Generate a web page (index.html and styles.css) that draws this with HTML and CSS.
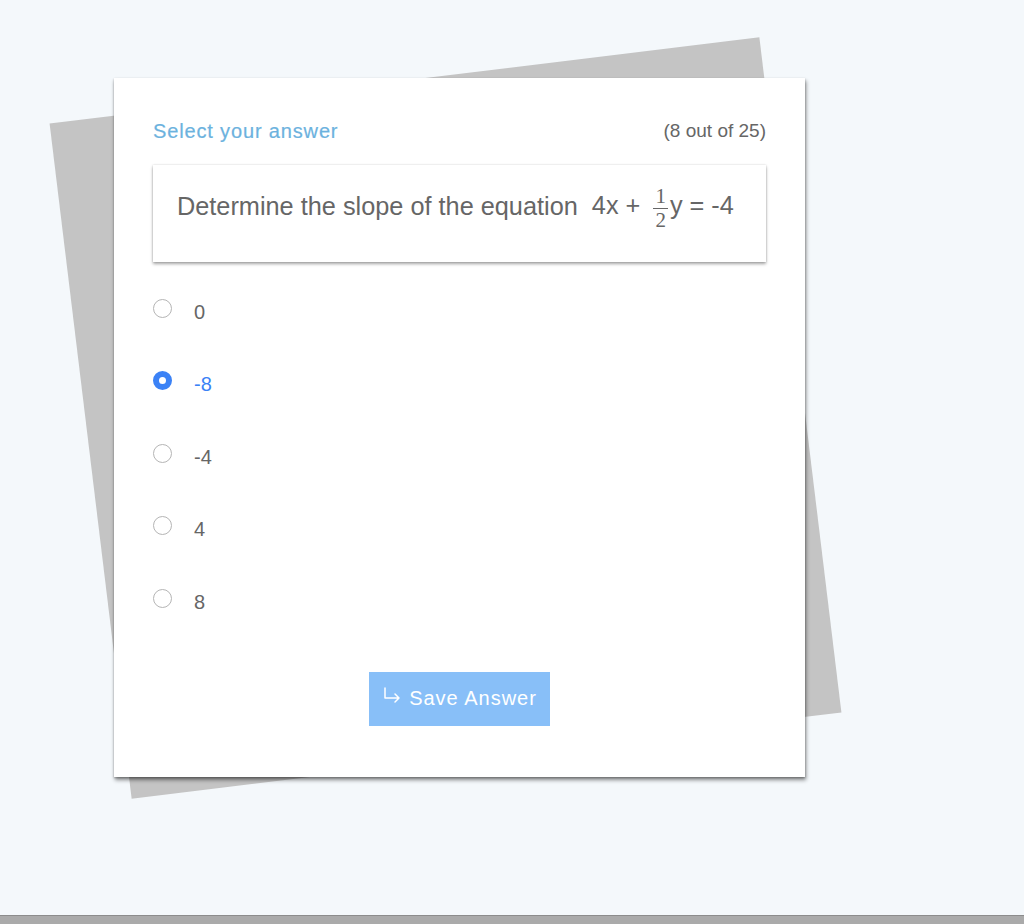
FILE: index.html
```html
<!DOCTYPE html>
<html>
<head>
<meta charset="utf-8">
<link rel="stylesheet" href="styles.css">
</head>
<body>
<div class="page">
  <div class="stage">
    <div class="card">
      <div class="header">
        <span class="title">Select your answer</span>
        <span class="count">(8 out of 25)</span>
      </div>
      <div class="question">
        <span class="qline"><span class="qtext">Determine the slope of the equation</span><span class="math">4x + <span class="frac"><span class="num">1</span><span class="den">2</span></span>y = -4</span></span>
      </div>
      <div class="options">
        <label class="option"><span class="radio"></span><span class="label">0</span></label>
        <label class="option selected"><span class="radio"></span><span class="label">-8</span></label>
        <label class="option"><span class="radio"></span><span class="label">-4</span></label>
        <label class="option"><span class="radio"></span><span class="label">4</span></label>
        <label class="option"><span class="radio"></span><span class="label">8</span></label>
      </div>
      <div class="actions">
        <button class="save"><svg class="icon" width="20" height="18" viewBox="0 0 20 18"><path d="M3 1 V11 H17 M13 7 L17 11 L13 15" fill="none" stroke="#fff" stroke-width="1.5" stroke-linecap="round" stroke-linejoin="round"/></svg><span>Save Answer</span></button>
      </div>
    </div>
  </div>
  <div class="bottombar"></div>
</div>
</body>
</html>
```

FILE: styles.css
```css
html, body {
  margin: 0;
  padding: 0;
}
body {
  background: #f4f8fb;
  font-family: "Liberation Sans", Arial, sans-serif;
  color: #666;
}
.page {
  height: 924px;
  display: flex;
  flex-direction: column;
  overflow: hidden;
}
.stage {
  flex: 1;
  padding: 78px 0 0 114px;
}
.card {
  position: relative;
  width: 691px;
  height: 699px;
  box-sizing: border-box;
  background: #fff;
  padding: 41px 39px 0 39px;
  box-shadow: 0 1px 2px rgba(0,0,0,0.25), 1px 3px 4px rgba(0,0,0,0.45);
}
.card::before {
  content: "";
  position: absolute;
  width: 715px;
  height: 680px;
  left: -26.5px;
  top: -0.5px;
  background: #c4c4c4;
  transform: rotate(-6.93deg);
  z-index: -1;
}
.header {
  display: flex;
  justify-content: space-between;
  align-items: center;
  height: 24px;
  line-height: 24px;
}
.title {
  color: #6cb2de;
  font-size: 20px;
  letter-spacing: 0.85px;
  -webkit-text-stroke: 0.2px #6cb2de;
}
.count {
  font-size: 19px;
  color: #666;
}
.question {
  margin-top: 22px;
  height: 97px;
  box-sizing: border-box;
  padding: 0 24px 12px 24px;
  display: flex;
  align-items: center;
  font-size: 25.3px;
  color: #666;
  box-shadow: 0 0 2px rgba(0,0,0,0.15), 0 2px 3px rgba(0,0,0,0.35);
}
.qline {
  white-space: nowrap;
  line-height: 30px;
}
.math {
  margin-left: 14px;
}
.frac {
  display: inline-block;
  vertical-align: middle;
  text-align: center;
  font-family: "Liberation Serif", "DejaVu Serif", serif;
  font-size: 21px;
  line-height: 18px;
  margin: 0 2px 0 6px;
  position: relative;
  top: 0px;
}
.num {
  display: block;
  border-bottom: 1px solid #666;
  padding: 0 2px 3px 2px;
}
.den {
  display: block;
  padding: 2px 2px 0 2px;
}
.options {
  margin-top: 13px;
  display: flex;
  flex-direction: column;
}
.option {
  height: 72.5px;
  display: flex;
  align-items: center;
  font-size: 20px;
  color: #666;
}
.radio {
  width: 19px;
  height: 19px;
  box-sizing: border-box;
  border: 1.5px solid #b5b5b5;
  border-radius: 50%;
  margin-right: 22px;
  position: relative;
  top: -3px;
}
.option .label {
  position: relative;
  top: 1px;
}
.option.selected .radio {
  border: 6px solid #3b82f6;
  background: #fff;
}
.option.selected .label {
  color: #3b82f6;
}
.actions {
  margin-top: 34px;
  display: flex;
  justify-content: center;
}
.save {
  width: 181px;
  height: 54px;
  border: none;
  background: #88bff8;
  color: #fff;
  font-family: "Liberation Sans", Arial, sans-serif;
  font-size: 20px;
  letter-spacing: 1px;
  display: flex;
  align-items: center;
  justify-content: center;
  gap: 7px;
  padding: 0;
}
.save .icon {
  position: relative;
  top: -3px;
}
.bottombar {
  height: 8px;
  background: #aaa;
  border-top: 1px solid #8c8c8c;
  flex: none;
}
```
